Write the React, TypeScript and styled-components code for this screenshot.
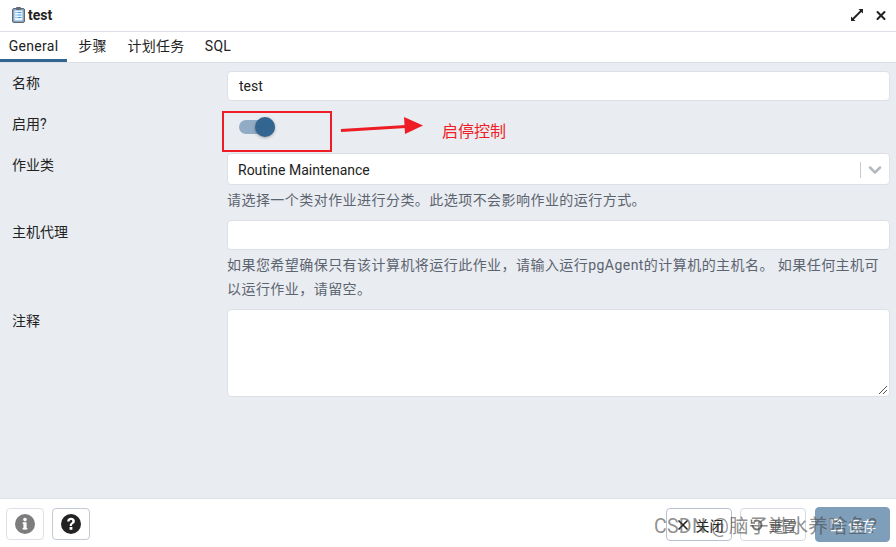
import React from "react"
import styled, { createGlobalStyle } from "styled-components"
import { ChevronDown, X } from "lucide-react"

const GlobalStyle = createGlobalStyle`
  html, body {
    margin: 0;
    padding: 0;
    background: #fff;
  }
  * {
    box-sizing: border-box;
  }
`

const Dialog = styled.div`
  position: relative;
  width: 896px;
  height: 547px;
  display: flex;
  flex-direction: column;
  overflow: hidden;
  font-family: Roboto, "Noto Sans CJK SC", sans-serif;
  font-size: 14px;
  color: #222;
  background: #fff;
`

const TitleBar = styled.div`
  height: 32px;
  display: flex;
  align-items: center;
  padding: 0 8px 1px 12px;
  border-bottom: 1px solid #dde0e6;
`

const Title = styled.span`
  margin-left: 3px;
  font-size: 14px;
  font-weight: 700;
  flex: 1;
  color: #222;
`

const TitleButton = styled.span`
  display: flex;
  width: 14px;
  height: 14px;
  margin-left: 10px;
  align-items: center;
  justify-content: center;
  color: #222;
`

const TabBar = styled.div`
  height: 31px;
  display: flex;
  border-bottom: 1px solid #dde0e6;
`

const Tab = styled.div<{ $active?: boolean; $width: number }>`
  width: ${(p) => p.$width}px;
  height: 30px;
  line-height: 29px;
  text-align: center;
  font-size: 14px;
  letter-spacing: 0.3px;
  color: #222;
  border-bottom: 3px solid ${(p) => (p.$active ? "#326690" : "transparent")};
`

const FormArea = styled.div`
  flex: 1;
  display: flex;
  flex-direction: column;
  gap: 8px;
  padding: 8px 6px 0 12px;
  background: #e9ecf1;
`

const Row = styled.div`
  display: grid;
  grid-template-columns: 215px 1fr;
`

const Label = styled.label<{ $offset?: number }>`
  line-height: 24px;
  font-size: 14px;
  color: #222;
  padding-top: ${(p) => p.$offset ?? 0}px;
`

const Field = styled.div`
  display: flex;
  flex-direction: column;
  min-width: 0;
`

const TextInput = styled.div`
  height: 30px;
  padding: 0 11px;
  line-height: 29px;
  font-size: 14px;
  color: #222;
  background: #fff;
  border: 1px solid #dde0e6;
  border-radius: 4px;
`

const SwitchField = styled.div`
  height: 36px;
  display: flex;
  align-items: center;
  padding-left: 12px;
`

const SwitchTrack = styled.div`
  position: relative;
  width: 36px;
  height: 14px;
  border-radius: 7px;
  background: #93acc5;
`

const SwitchThumb = styled.div`
  position: absolute;
  right: 0;
  top: -3px;
  width: 20px;
  height: 20px;
  border-radius: 50%;
  background: #326690;
  box-shadow: 0 1px 3px rgba(0, 0, 0, 0.3);
`

const SelectBox = styled.div`
  height: 32px;
  display: flex;
  align-items: center;
  padding: 1px 0 0 10px;
  background: #fff;
  border: 1px solid #dde0e6;
  border-radius: 4px;
`

const SelectValue = styled.span`
  flex: 1;
  font-size: 14px;
  color: #222;
`

const SelectDivider = styled.span`
  width: 1px;
  height: 16px;
  background: #c8ccd2;
`

const SelectArrow = styled.span`
  width: 28px;
  display: flex;
  justify-content: center;
  color: #b5b9bf;
`

const Hint = styled.div`
  font-size: 14px;
  line-height: 24px;
  padding-top: 3px;
  letter-spacing: 0.45px;
  color: #5c6470;
`

const TextArea = styled.div`
  position: relative;
  height: 88px;
  background: #fff;
  border: 1px solid #dde0e6;
  border-radius: 4px;
`

const ResizeGrip = styled.svg`
  position: absolute;
  right: 1px;
  bottom: 1px;
`

const Footer = styled.div`
  height: 49px;
  display: flex;
  align-items: flex-start;
  padding: 9px 6px 0;
  background: #fff;
  border-top: 1px solid #dde0e6;
`

const FooterLeft = styled.div`
  flex: 1;
  display: flex;
  gap: 8px;
`

const FooterRight = styled.div`
  display: flex;
  gap: 8px;
`

const IconButton = styled.div<{ $dim?: boolean }>`
  width: 38px;
  height: 32px;
  display: flex;
  align-items: center;
  justify-content: center;
  background: #fff;
  border: 1px solid ${(p) => (p.$dim ? "#dde0e6" : "#c3cad6")};
  border-radius: 4px;
  color: ${(p) => (p.$dim ? "#7d7d7d" : "#222")};
`

const ActionButton = styled.div<{ $primary?: boolean; $width: number; $dim?: boolean }>`
  width: ${(p) => p.$width}px;
  height: ${(p) => (p.$primary ? 35 : 33)}px;
  margin: ${(p) => (p.$primary ? "-1px 0 0 1px" : "0")};
  display: flex;
  align-items: center;
  justify-content: center;
  gap: 5px;
  font-size: 14px;
  color: ${(p) => (p.$primary ? "#fff" : p.$dim ? "#666" : "#222")};
  background: ${(p) => (p.$primary ? "#7f9eb9" : "#fff")};
  border: 1px solid ${(p) => (p.$primary ? "#7f9eb9" : p.$dim ? "#d6dae2" : "#b9c1d0")};
  border-radius: 4px;
`

const RedBox = styled.div`
  position: absolute;
  left: 222px;
  top: 111px;
  width: 110px;
  height: 41px;
  border: 2px solid #ee1c25;
`

const Arrow = styled.svg`
  position: absolute;
  left: 338px;
  top: 114px;
`

const Note = styled.span`
  position: absolute;
  left: 442px;
  top: 120px;
  font-size: 16px;
  line-height: 24px;
  color: #f01d24;
`

const Watermark = styled.span`
  position: absolute;
  left: 654px;
  top: 512px;
  font-family: Roboto, "Noto Sans CJK SC", sans-serif;
  font-size: 19.5px;
  letter-spacing: 0.3px;
  line-height: 30px;
  white-space: nowrap;
  color: rgba(70, 70, 70, 0.62);
`

const ClipboardIcon = () => (
  <svg width="13" height="16" viewBox="0 0 13 16">
    <rect x="0.5" y="1.5" width="12" height="14" rx="1.5" fill="#8aa4bd" stroke="#5d6b78" />
    <rect x="2.5" y="3.5" width="8" height="10" fill="#eaf4fc" />
    <rect x="4" y="0" width="5" height="3" rx="1" fill="#5d6b78" />
    <path d="M3.5 5.5h1M5.5 5.5h4M3.5 8h1M5.5 8h4M3.5 10.5h1M5.5 10.5h4" stroke="#3f9be0" strokeWidth="1" />
  </svg>
)

const ExpandIcon = () => (
  <svg width="14" height="14" viewBox="0 0 14 14" fill="#222">
    <path d="M8.5 1H13v4.5l-1.6-1.6-7.5 7.500L5.500 13H1V8.500l1.600 1.600 7.500-7.500z" />
  </svg>
)

const InfoIcon = () => (
  <svg width="20" height="20" viewBox="0 0 20 20">
    <circle cx="10" cy="10" r="10" fill="currentColor" />
    <rect x="8.4" y="8.4" width="3.2" height="7" fill="#fff" />
    <rect x="7.6" y="8.4" width="3" height="1.4" fill="#fff" />
    <rect x="7.6" y="14" width="4.8" height="1.4" fill="#fff" />
    <circle cx="10" cy="5.6" r="1.8" fill="#fff" />
  </svg>
)

const HelpIcon = () => (
  <svg width="20" height="20" viewBox="0 0 20 20">
    <circle cx="10" cy="10" r="10" fill="currentColor" />
    <path d="M6.2 7.400c0-2.200 1.700-3.600 3.900-3.600s3.800 1.400 3.800 3.300c0 2.800-3 2.700-3 4.800H8.700c0-3.200 2.600-3.100 2.600-4.600 0-.8-.5-1.200-1.300-1.200-.9 0-1.400.5-1.500 1.500z" fill="#fff" />
    <rect x="8.600" y="13" width="2.800" height="2.800" rx="0.4" fill="#fff" />
  </svg>
)

const ResetIcon = () => (
  <svg width="14" height="14" viewBox="0 0 14 14" fill="none" stroke="#777" strokeWidth="2">
    <path d="M2.500 7a4.500 4.500 0 1 0 1.500-3.300" />
    <path d="M1.500 1.500v3.500H5" strokeWidth="1.500" />
  </svg>
)

const SaveIcon = () => (
  <svg width="14" height="14" viewBox="0 0 14 14" fill="none" stroke="#fff" strokeWidth="1.500">
    <path d="M1.500 1.500h8.500l2.500 2.500v8.500h-11z" />
    <path d="M4 1.500v3.500h5v-3.500" />
  </svg>
)

const App = () => {
  return (
    <>
      <GlobalStyle />
      <Dialog>
        <TitleBar>
          <ClipboardIcon />
          <Title>test</Title>
          <TitleButton>
            <ExpandIcon />
          </TitleButton>
          <TitleButton>
            <X size={15} strokeWidth={3.5} />
          </TitleButton>
        </TitleBar>
        <TabBar>
          <Tab $active $width={67}>General</Tab>
          <Tab $width={51}>步骤</Tab>
          <Tab $width={76}>计划任务</Tab>
          <Tab $width={48}>SQL</Tab>
        </TabBar>
        <FormArea>
          <Row>
            <Label>名称</Label>
            <TextInput>test</TextInput>
          </Row>
          <Row>
            <Label $offset={3}>启用?</Label>
            <SwitchField>
              <SwitchTrack>
                <SwitchThumb />
              </SwitchTrack>
            </SwitchField>
          </Row>
          <Row>
            <Label>作业类</Label>
            <Field>
              <SelectBox>
                <SelectValue>Routine Maintenance</SelectValue>
                <SelectDivider />
                <SelectArrow>
                  <ChevronDown size={20} strokeWidth={3} />
                </SelectArrow>
              </SelectBox>
              <Hint>请选择一个类对作业进行分类。此选项不会影响作业的运行方式。</Hint>
            </Field>
          </Row>
          <Row>
            <Label>主机代理</Label>
            <Field>
              <TextInput />
              <Hint>如果您希望确保只有该计算机将运行此作业，请输入运行pgAgent的计算机的主机名。 如果任何主机可以运行作业，请留空。</Hint>
            </Field>
          </Row>
          <Row>
            <Label>注释</Label>
            <TextArea>
              <ResizeGrip width="12" height="12" viewBox="0 0 12 12" stroke="#555" strokeWidth="1">
                <path d="M11 3L3 11M11 7L7 11" />
              </ResizeGrip>
            </TextArea>
          </Row>
        </FormArea>
        <Footer>
          <FooterLeft>
            <IconButton $dim>
              <InfoIcon />
            </IconButton>
            <IconButton>
              <HelpIcon />
            </IconButton>
          </FooterLeft>
          <FooterRight>
            <ActionButton $width={66}>
              <X size={16} strokeWidth={2.5} />
              关闭
            </ActionButton>
            <ActionButton $dim $width={66}>
              <ResetIcon />
              重置
            </ActionButton>
            <ActionButton $primary $width={75}>
              <SaveIcon />
              保存
            </ActionButton>
          </FooterRight>
        </Footer>
        <RedBox />
        <Arrow width="90" height="26" viewBox="0 0 90 26">
          <path d="M3 16.500L68 12.500" stroke="#ee1c25" strokeWidth="3" />
          <path d="M66 3L85 11.500L67 20z" fill="#ee1c25" />
        </Arrow>
        <Note>启停控制</Note>
        <Watermark>CSDN @脑子进水养啥鱼?</Watermark>
      </Dialog>
    </>
  )
}

export default App
